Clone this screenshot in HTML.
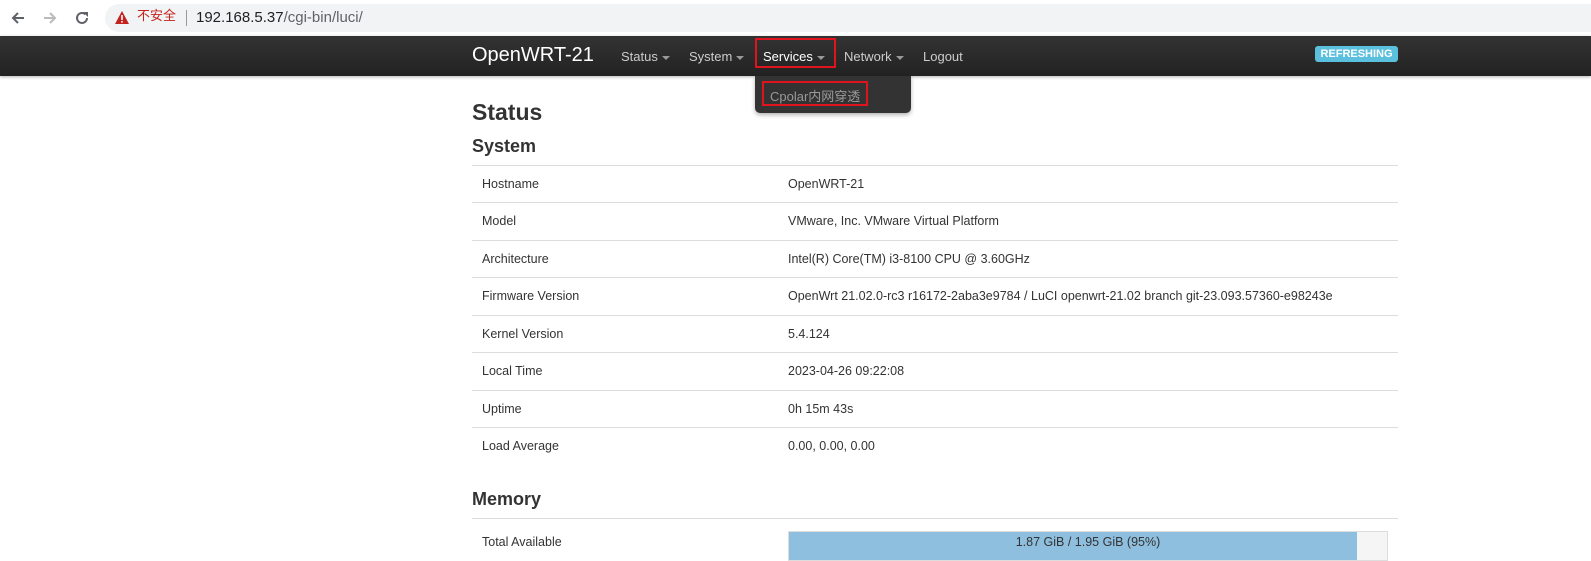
<!DOCTYPE html>
<html><head><meta charset="utf-8"><style>
*{margin:0;padding:0;box-sizing:border-box}
body{width:1591px;height:558px;overflow:hidden;background:#fff;font-family:"Liberation Sans",Arial,sans-serif;color:#333;position:relative}
.tb{position:absolute;left:0;top:0;width:1591px;height:36px;background:#fff}
.pill{position:absolute;left:105px;top:4px;width:1500px;height:28px;border-radius:14px;background:#f1f3f4}
.url{position:absolute;left:196px;top:9px;font-size:15px;color:#202124}
.url span{color:#5f6368}
.warn{position:absolute;left:137px;top:8px;font-size:13px;line-height:16px;color:#c5221f;font-family:"Liberation Sans","Noto Sans CJK SC",sans-serif}
.nav{position:absolute;left:0;top:36px;width:1591px;height:40px;background:linear-gradient(#333,#222);box-shadow:0 1px 3px rgba(0,0,0,.3)}
.brand{position:absolute;left:472px;top:8px;font-size:20px;color:#fff}
.mi{position:absolute;top:13px;font-size:13px;color:#ccc}
.car{display:inline-block;width:0;height:0;border-left:4px solid transparent;border-right:4px solid transparent;border-top:4px solid #999;vertical-align:middle;margin-left:4px}
.ref{position:absolute;left:1315px;top:10px;width:83px;height:16px;background:#5bc0de;border-radius:3px;color:#fff;font-size:11px;font-weight:bold;text-align:center;line-height:16px}
.dd{position:absolute;left:755px;top:76px;width:156px;height:37px;background:#333;border-radius:0 0 5px 5px;box-shadow:0 2px 4px rgba(0,0,0,.3)}
.red{position:absolute;border:2px solid #e0141e}
h1{position:absolute;left:472px;top:99px;font-size:23px;font-weight:bold;color:#333}
h2{position:absolute;left:472px;font-size:18px;font-weight:bold;color:#333}
.hr{position:absolute;left:472px;width:926px;height:1px;background:#ddd}
.l{position:absolute;left:482px;font-size:12.5px;color:#333}
.v{position:absolute;left:788px;font-size:12.5px;color:#333}
</style></head><body>
<div class="tb">
<svg style="position:absolute;left:10px;top:10px" width="16" height="16" viewBox="0 0 16 16"><path d="M14 8H3M8 3L3 8l5 5" stroke="#5f6368" stroke-width="2" fill="none"/></svg>
<svg style="position:absolute;left:42px;top:10px" width="16" height="16" viewBox="0 0 16 16"><path d="M2 8h11M8 3l5 5-5 5" stroke="#bbb" stroke-width="2" fill="none"/></svg>
<svg style="position:absolute;left:74px;top:10px" width="16" height="16" viewBox="0 0 16 16"><path d="M13 8a5 5 0 1 1-1.5-3.6" stroke="#5f6368" stroke-width="2" fill="none"/><path d="M9 2h5v5z" fill="#5f6368"/></svg>
<div class="pill"></div>
<svg style="position:absolute;left:115px;top:11px" width="14" height="13" viewBox="0 0 14 13"><path d="M7 0L14 13H0z" fill="#c5221f"/><rect x="6.2" y="4" width="1.6" height="5" fill="#fff"/><rect x="6.2" y="10" width="1.6" height="1.6" fill="#fff"/></svg>
<div class="warn">不安全</div>
<div style="position:absolute;left:186px;top:10px;width:1px;height:16px;background:#999"></div>
<div class="url">192.168.5.37<span>/cgi-bin/luci/</span></div>
</div>
<div class="nav">
<div class="brand">OpenWRT-21</div>
<div class="mi" style="left:621px">Status<span class="car"></span></div>
<div class="mi" style="left:689px">System<span class="car"></span></div>
<div class="mi" style="left:763px;color:#fff">Services<span class="car"></span></div>
<div class="mi" style="left:844px">Network<span class="car"></span></div>
<div class="mi" style="left:923px">Logout</div>
<div class="ref">REFRESHING</div>
</div>
<div class="dd"><div style="position:absolute;left:15px;top:10px;font-size:13px;color:#999;font-family:'Liberation Sans','Noto Sans CJK SC',sans-serif">Cpolar内网穿透</div></div>
<div class="red" style="left:755px;top:38px;width:81px;height:30px"></div>
<div class="red" style="left:762px;top:81px;width:106px;height:25px"></div>
<h1>Status</h1>
<h2 style="top:136px">System</h2>
<div class="hr" style="top:165px"></div>
<div class="l" style="top:177px">Hostname</div><div class="v" style="top:177px">OpenWRT-21</div>
<div class="hr" style="top:202px"></div>
<div class="l" style="top:214px">Model</div><div class="v" style="top:214px">VMware, Inc. VMware Virtual Platform</div>
<div class="hr" style="top:240px"></div>
<div class="l" style="top:252px">Architecture</div><div class="v" style="top:252px">Intel(R) Core(TM) i3-8100 CPU @ 3.60GHz</div>
<div class="hr" style="top:277px"></div>
<div class="l" style="top:289px">Firmware Version</div><div class="v" style="top:289px">OpenWrt 21.02.0-rc3 r16172-2aba3e9784 / LuCI openwrt-21.02 branch git-23.093.57360-e98243e</div>
<div class="hr" style="top:315px"></div>
<div class="l" style="top:327px">Kernel Version</div><div class="v" style="top:327px">5.4.124</div>
<div class="hr" style="top:352px"></div>
<div class="l" style="top:364px">Local Time</div><div class="v" style="top:364px">2023-04-26 09:22:08</div>
<div class="hr" style="top:390px"></div>
<div class="l" style="top:402px">Uptime</div><div class="v" style="top:402px">0h 15m 43s</div>
<div class="hr" style="top:427px"></div>
<div class="l" style="top:439px">Load Average</div><div class="v" style="top:439px">0.00, 0.00, 0.00</div>
<h2 style="top:489px">Memory</h2>
<div class="hr" style="top:518px"></div>
<div class="l" style="top:535px">Total Available</div>
<div style="position:absolute;left:788px;top:531px;width:600px;height:30px;border:1px solid #ddd;background:#f5f5f5"><div style="width:568px;height:100%;background:#8fbfde"></div><div style="position:absolute;left:0;top:3px;width:100%;text-align:center;font-size:12.5px;color:#333">1.87 GiB / 1.95 GiB (95%)</div></div>
</body></html>
